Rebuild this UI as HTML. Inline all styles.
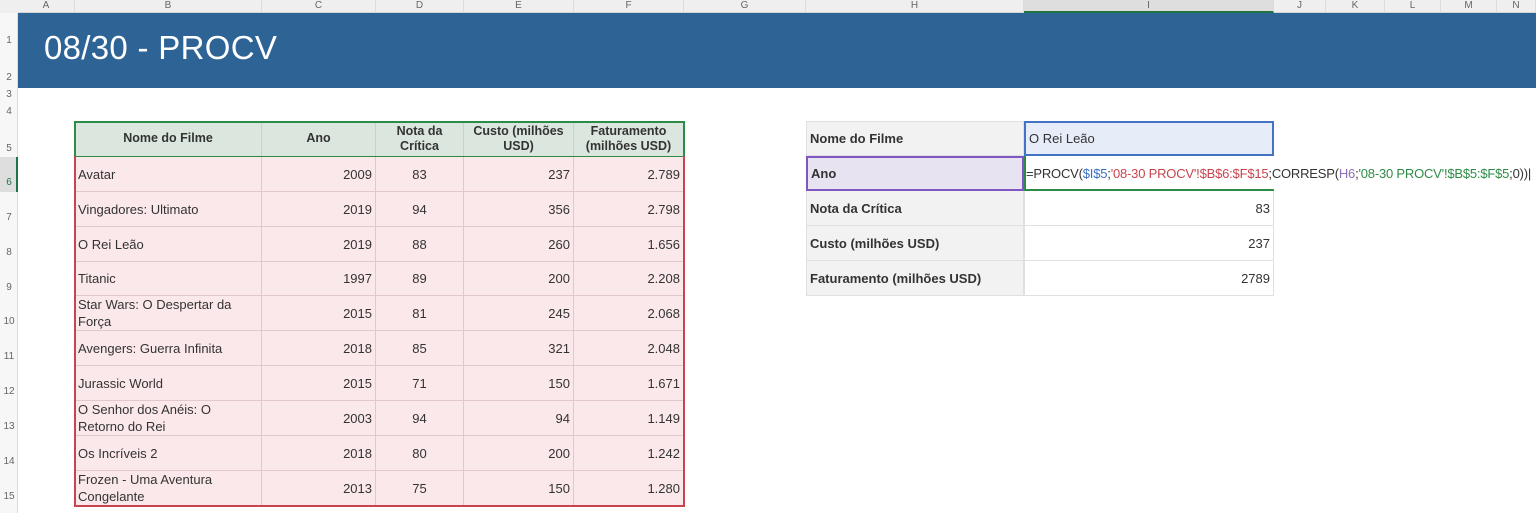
<!DOCTYPE html>
<html><head><meta charset="utf-8"><style>
*{margin:0;padding:0;box-sizing:border-box}
body{width:1536px;height:513px;overflow:hidden;background:#fff;font-family:"Liberation Sans",sans-serif;position:relative;color:#333}
.a{position:absolute}
.ch{top:0;height:13px;background:#efefef;border-bottom:1px solid #d4d4d4;border-right:1px solid #dcdcdc;font-size:10px;color:#666;text-align:center;line-height:12px}
.rh{left:0;width:18px;font-size:10px;color:#666;text-align:center}
.c{position:absolute;font-size:13px;display:flex;align-items:center;padding:0 3px;border-right:1px solid #e2c7cb;border-bottom:1px solid #e2c7cb;line-height:17px}
.p{background:#fbe8ea}
.r{justify-content:flex-end}
.m{justify-content:center;text-align:center}
.h{background:#dbe6df;font-weight:bold;border-color:#c8d2cc;font-size:12.5px;line-height:15px}
.g{background:#f2f2f2;font-weight:bold;border:1px solid #e0e0e0;border-top:none}
.w{background:#fff;border:1px solid #e0e0e0;border-top:none}
</style></head><body>
<div class="a" style="left:0;top:0;width:1536px;height:13px;background:#efefef"></div>
<div class="a ch" style="left:18px;width:57px">A</div>
<div class="a ch" style="left:75px;width:187px">B</div>
<div class="a ch" style="left:262px;width:114px">C</div>
<div class="a ch" style="left:376px;width:88px">D</div>
<div class="a ch" style="left:464px;width:110px">E</div>
<div class="a ch" style="left:574px;width:110px">F</div>
<div class="a ch" style="left:684px;width:122px">G</div>
<div class="a ch" style="left:806px;width:218px">H</div>
<div class="a ch" style="left:1024px;width:250px;background:#dedede;border-bottom:2px solid #217346">I</div>
<div class="a ch" style="left:1274px;width:52px">J</div>
<div class="a ch" style="left:1326px;width:59px">K</div>
<div class="a ch" style="left:1385px;width:56px">L</div>
<div class="a ch" style="left:1441px;width:56px">M</div>
<div class="a ch" style="left:1497px;width:39px">N</div>
<div class="a" style="left:0;top:13px;width:18px;height:500px;background:#f7f7f7;border-right:1px solid #ddd"></div>
<div class="a" style="left:0;top:157px;width:18px;height:35px;background:#dedede;border-right:2px solid #217346"></div>
<div class="a rh" style="top:35px">1</div>
<div class="a rh" style="top:72px">2</div>
<div class="a rh" style="top:89px">3</div>
<div class="a rh" style="top:106px">4</div>
<div class="a rh" style="top:143px">5</div>
<div class="a rh" style="top:177px;color:#217346">6</div>
<div class="a rh" style="top:212px">7</div>
<div class="a rh" style="top:247px">8</div>
<div class="a rh" style="top:282px">9</div>
<div class="a rh" style="top:316px">10</div>
<div class="a rh" style="top:351px">11</div>
<div class="a rh" style="top:386px">12</div>
<div class="a rh" style="top:421px">13</div>
<div class="a rh" style="top:456px">14</div>
<div class="a rh" style="top:491px">15</div>
<div class="a" style="left:18px;top:13px;width:1518px;height:75px;background:#2e6396"></div>
<div class="a" style="left:44px;top:29px;font-size:33px;color:#fff;letter-spacing:0.3px">08/30 - PROCV</div>

<div class="c h m" style="left:75px;top:121px;width:187px;height:36px">Nome do Filme</div>
<div class="c h m" style="left:262px;top:121px;width:114px;height:36px">Ano</div>
<div class="c h m" style="left:376px;top:121px;width:88px;height:36px">Nota da Crítica</div>
<div class="c h m" style="left:464px;top:121px;width:110px;height:36px">Custo (milhões USD)</div>
<div class="c h m" style="left:574px;top:121px;width:110px;height:36px">Faturamento (milhões USD)</div>
<div class="a" style="left:74px;top:121px;width:611px;height:37px;border:2px solid #2e8b46"></div>

<div id="rows"></div>
<script>
var d=[["Avatar",2009,83,237,"2.789"],["Vingadores: Ultimato",2019,94,356,"2.798"],["O Rei Leão",2019,88,260,"1.656"],["Titanic",1997,89,200,"2.208"],["Star Wars: O Despertar da Força",2015,81,245,"2.068"],["Avengers: Guerra Infinita",2018,85,321,"2.048"],["Jurassic World",2015,71,150,"1.671"],["O Senhor dos Anéis: O Retorno do Rei",2003,94,94,"1.149"],["Os Incríveis 2",2018,80,200,"1.242"],["Frozen - Uma Aventura Congelante",2013,75,150,"1.280"]];
var tops=[157,192,227,262,296,331,366,401,436,471,506],h="";
var cols=[[75,187,""],[262,114,"r"],[376,88,"m"],[464,110,"r"],[574,110,"r"]];
d.forEach(function(r,i){cols.forEach(function(c,j){h+='<div class="c p '+c[2]+'" style="left:'+c[0]+'px;top:'+tops[i]+'px;width:'+c[1]+'px;height:'+(tops[i+1]-tops[i])+'px">'+r[j]+'</div>';});});
document.getElementById("rows").innerHTML=h;
</script>
<div class="a" style="left:74px;top:156px;width:611px;height:351px;border:2px solid #c9444f;border-top:none"></div>

<div class="c g" style="left:806px;top:121px;width:218px;height:35px;border-top:1px solid #e0e0e0">Nome do Filme</div>
<div class="c w" style="left:1024px;top:121px;width:250px;height:35px;background:#e6ecf8;border:2px solid #4472c4;font-weight:normal">O Rei Leão</div>
<div class="c g" style="left:806px;top:156px;width:218px;height:35px;background:#e8e3f0;border:2px solid #7e57c2">Ano</div>
<div class="c w" style="left:1024px;top:156px;width:506px;height:35px;border:none;border-left:2px solid #2e8b46;padding-left:0;white-space:nowrap;letter-spacing:-0.2px">=PROCV(<span style="color:#3a6fc4">$I$5</span>;<span style="color:#c9444f">'08-30 PROCV'!$B$6:$F$15</span>;CORRESP(<span style="color:#8e6fb5">H6</span>;<span style="color:#2e8b46">'08-30 PROCV'!$B$5:$F$5</span>;0))|</div>
<div class="a" style="left:1024px;top:189px;width:250px;height:2px;background:#2e8b46"></div>
<div class="c g" style="left:806px;top:191px;width:218px;height:35px">Nota da Crítica</div>
<div class="c w r" style="left:1024px;top:191px;width:250px;height:35px">83</div>
<div class="c g" style="left:806px;top:226px;width:218px;height:35px">Custo (milhões USD)</div>
<div class="c w r" style="left:1024px;top:226px;width:250px;height:35px">237</div>
<div class="c g" style="left:806px;top:261px;width:218px;height:35px">Faturamento (milhões USD)</div>
<div class="c w r" style="left:1024px;top:261px;width:250px;height:35px">2789</div>
</body></html>
